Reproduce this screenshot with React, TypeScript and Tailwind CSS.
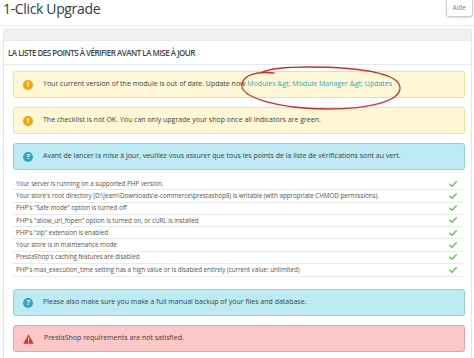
import type { ReactNode } from 'react';

// Types
type AlertKind = 'warning' | 'info' | 'danger';

interface AlertProps {
    kind: AlertKind;
    children: ReactNode;
}

const checks: string[] = [
    'Your server is running on a supported PHP version.',
    "Your store's root directory (D:\\Jeam\\Downloads\\e-commerce\\prestashop8) is writable (with appropriate CHMOD permissions).",
    'PHP\'s "Safe mode" option is turned off',
    'PHP\'s "allow_url_fopen" option is turned on, or cURL is installed',
    'PHP\'s "zip" extension is enabled',
    'Your store is in maintenance mode',
    "PrestaShop's caching features are disabled",
    "PHP's max_execution_time setting has a high value or is disabled entirely (current value: unlimited)",
];

const alertStyles: Record<AlertKind, string> = {
    warning: 'bg-[#fff7d5] border-[#f3df95]',
    info: 'bg-[#bdeaf3] border-[#8fd3e2]',
    danger: 'bg-[#fcc7c7] border-[#eba3a3]',
};

function AlertIcon({ kind }: { kind: AlertKind }) {
    if (kind === 'danger') {
        return (
            <svg width="11" height="10" viewBox="0 0 22 20" className="shrink-0">
                <path d="M11 0.5 L21.5 19.5 L0.5 19.5 Z" fill="#d9352b" strokeLinejoin="round" />
                <rect x="10" y="6.5" width="2.2" height="7" fill="#fff" />
                <rect x="10" y="15" width="2.2" height="2.2" fill="#fff" />
            </svg>
        );
    }
    const color = kind === 'warning' ? 'bg-[#f5a40f]' : 'bg-[#2aa7c9]';
    return (
        <span className={`flex h-[10px] w-[10px] shrink-0 items-center justify-center rounded-full ${color} text-[7.5px] font-bold leading-none text-white`}>
            {kind === 'warning' ? '!' : '?'}
        </span>
    );
}

function Alert({ kind, children }: AlertProps) {
    return (
        <div className={`flex h-[27px] items-center gap-[10px] rounded-[3px] border pl-[9px] ${alertStyles[kind]}`}>
            <AlertIcon kind={kind} />
            <p className="text-[7px] tracking-[0px] text-[#3c3f44]">{children}</p>
        </div>
    );
}

function CheckIcon() {
    return (
        <svg width="8" height="6" viewBox="0 0 16 12" className="shrink-0">
            <path d="M1.5 6.5 L5.8 10.5 L14.5 1.5" fill="none" stroke="#6fbf6a" strokeWidth="3" strokeLinecap="round" strokeLinejoin="round" />
        </svg>
    );
}

export default function App() {
    return (
        <div className="relative h-[358px] w-[474px] overflow-hidden bg-white font-['Open_Sans',sans-serif]">

            {/* Page header */}
            <div className="flex h-[26px] items-start justify-between border-b border-[#e8e8e8] pl-[3px]">
                <h1 className="pt-[2px] text-[14px] leading-none tracking-[-0.35px] text-[#363a41]">1-Click Upgrade</h1>
                <button className="-mt-[4px] mr-[1px] h-[21px] rounded-[3px] border border-[#c7cdd0] bg-white px-[6px] pt-[3px] text-[6.5px] text-[#6c868e] shadow-sm">
                    Aide
                </button>
            </div>

            {/* Panel */}
            <div className="ml-[3px] mr-[2px] mt-[3px] rounded-t-[3px] border-x border-t border-[#e3e6e8]">
                <div className="h-[10px] bg-[#eef0f1]" />
                <div className="flex h-[25px] items-center border-y border-[#e8eaeb] pl-[4px]">
                    <h2 className="text-[8px] font-semibold uppercase tracking-[-0.5px] text-[#444]">
                        La liste des points à vérifier avant la mise à jour
                    </h2>
                </div>

                <div className="flex flex-col pb-[10px] pl-[9px] pr-[6px] pt-[6px]">
                    <div className="flex flex-col gap-[9px]">
                        <Alert kind="warning">
                            Your current version of the module is out of date. Update now{' '}
                            <span className="text-[#25a8c0]">Modules &amp;gt; Module Manager &amp;gt; Updates</span>
                        </Alert>
                        <Alert kind="warning">
                            The checklist is not OK. You can only upgrade your shop once all indicators are green.
                        </Alert>
                        <Alert kind="info">
                            Avant de lancer la mise à jour, veuillez vous assurer que tous les points de la liste de vérifications sont au vert.
                        </Alert>
                    </div>

                    {/* Checklist */}
                    <div className="mt-[8px] mr-[2px] flex flex-col divide-y divide-[#eaeaea] border-b border-[#eaeaea]">
                        {checks.map((item) => (
                            <div key={item} className="flex h-[12.25px] items-center justify-between pl-[3px] pr-[6px]">
                                <span className="text-[6.3px] tracking-[-0.05px] text-[#555]">{item}</span>
                                <CheckIcon />
                            </div>
                        ))}
                    </div>

                    <div className="mt-[12px] flex flex-col gap-[9px]">
                        <Alert kind="info">Please also make sure you make a full manual backup of your files and database.</Alert>
                        <Alert kind="danger">PrestaShop requirements are not satisfied.</Alert>
                    </div>
                </div>
            </div>

            {/* Red hand-drawn circle around the link */}
            <svg className="pointer-events-none absolute left-[236px] top-[63px]" width="170" height="52" viewBox="0 0 170 52">
                <path
                    d="M38 10 C 20 8, 8 12, 6 21 C 3 34, 42 46, 92 46 C 134 46, 164 38, 164 25 C 164 12, 132 4, 72 4 C 52 4, 32 6, 24 10"
                    fill="none"
                    stroke="#c8322c"
                    strokeWidth="1.3"
                    strokeLinecap="round"
                />
            </svg>
        </div>
    );
}
